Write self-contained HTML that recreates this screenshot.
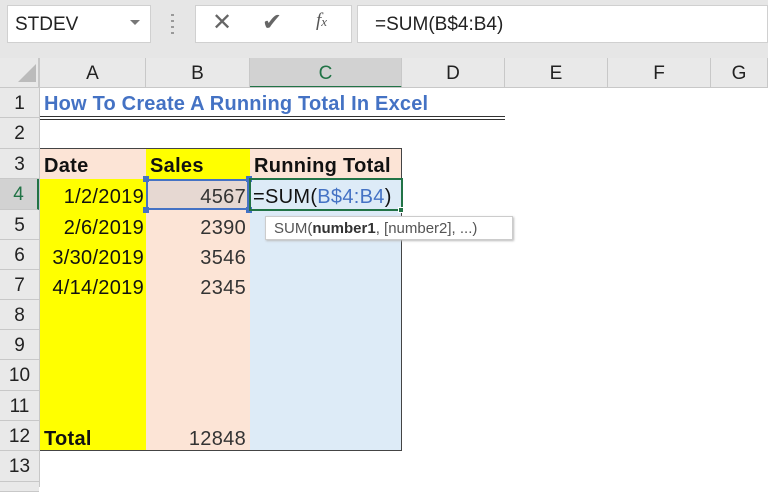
<!DOCTYPE html>
<html><head><meta charset="utf-8"><style>
body{margin:0;width:768px;height:487px;overflow:hidden;background:#fff;font-family:"Liberation Sans",Calibri,sans-serif;position:relative}
.a{position:absolute;box-sizing:border-box}
.rh{position:absolute;left:0;width:39px;background:#e9e9e9;border-bottom:1px solid #c8c8c8;color:#222;font-size:19px;text-align:center;box-sizing:border-box}
.ch{position:absolute;top:58px;height:30px;background:#e9e9e9;border-right:1px solid #c8c8c8;color:#222;font-size:19px;text-align:center;line-height:31px;box-sizing:border-box}
.c{position:absolute;box-sizing:border-box;font-size:20px;color:#111;white-space:nowrap;letter-spacing:0.3px}
</style></head><body>
<div class="a" style="left:0;top:0;width:768px;height:58px;background:#e6e6e6"></div>
<div class="a" style="left:7px;top:5px;width:144px;height:38px;background:#fff;border:1px solid #d0d0d0;font-size:19px;padding:8px 0 0 7px;color:#222">STDEV</div>
<div class="a" style="left:130px;top:20px;width:0;height:0;border-left:5px solid transparent;border-right:5px solid transparent;border-top:5px solid #777"></div>
<div class="a" style="left:171px;top:14px;width:3px;height:20px;background:repeating-linear-gradient(#999 0 2px,transparent 2px 6px)"></div>
<div class="a" style="left:195px;top:5px;width:157px;height:38px;background:#fff;border:1px solid #d0d0d0"></div>
<div class="a" style="left:212px;top:8px;font-size:24px;color:#666">✕</div>
<div class="a" style="left:262px;top:8px;font-size:24px;color:#666">✔</div>
<div class="a" style="left:316px;top:10px;font-size:19px;color:#555;font-style:italic;font-family:'Liberation Serif',serif">f<span style="font-size:13px">x</span></div>
<div class="a" style="left:357px;top:5px;width:411px;height:38px;background:#fff;border:1px solid #d0d0d0;font-size:19px;padding:8px 0 0 17px;color:#222">=SUM(B$4:B4)</div>
<div class="a" style="left:0;top:58px;width:39px;height:30px;background:#e9e9e9;border-right:1px solid #c8c8c8"></div>
<div class="a" style="left:18px;top:64px;width:0;height:0;border-left:18px solid transparent;border-bottom:18px solid #bbb"></div>
<div class="ch" style="left:40px;width:106px">A</div>
<div class="ch" style="left:146px;width:104px">B</div>
<div class="ch" style="left:250px;width:152px;background:#d2d2d2;color:#217346;border-bottom:2px solid #217346">C</div>
<div class="ch" style="left:402px;width:103px">D</div>
<div class="ch" style="left:505px;width:103px">E</div>
<div class="ch" style="left:608px;width:103px">F</div>
<div class="ch" style="left:711px;width:57px">G</div>
<div class="a" style="left:0;top:87px;width:768px;height:1px;background:#c8c8c8"></div>
<div class="a" style="left:39px;top:58px;width:1px;height:429px;background:#c8c8c8"></div>
<div class="rh" style="top:88px;height:30px;line-height:32px">1</div>
<div class="rh" style="top:118px;height:31px;line-height:32px">2</div>
<div class="rh" style="top:149px;height:30px;line-height:32px">3</div>
<div class="rh" style="top:179px;height:31px;line-height:32px;background:#d2d2d2;color:#217346;border-right:2px solid #217346">4</div>
<div class="rh" style="top:210px;height:30px;line-height:32px">5</div>
<div class="rh" style="top:240px;height:30px;line-height:32px">6</div>
<div class="rh" style="top:270px;height:30px;line-height:32px">7</div>
<div class="rh" style="top:300px;height:30px;line-height:32px">8</div>
<div class="rh" style="top:330px;height:30px;line-height:32px">9</div>
<div class="rh" style="top:360px;height:31px;line-height:32px">10</div>
<div class="rh" style="top:391px;height:30px;line-height:32px">11</div>
<div class="rh" style="top:421px;height:30px;line-height:32px">12</div>
<div class="rh" style="top:451px;height:31px;line-height:32px">13</div>
<div class="rh" style="top:482px;height:10px"></div>
<div class="c" style="left:44px;top:93px;color:#4472c4;font-weight:bold;letter-spacing:0.2px">How To Create A Running Total In Excel</div>
<div class="a" style="left:40px;top:116px;width:465px;height:4px;border-top:1px solid #333;border-bottom:1px solid #333"></div>
<div class="a" style="left:40px;top:149px;width:106px;height:30px;background:#fce4d6"></div>
<div class="a" style="left:146px;top:149px;width:104px;height:30px;background:#ffff00"></div>
<div class="a" style="left:250px;top:149px;width:152px;height:30px;background:#fce4d6"></div>
<div class="a" style="left:40px;top:179px;width:106px;height:272px;background:#ffff00"></div>
<div class="a" style="left:146px;top:179px;width:104px;height:272px;background:#fce4d6"></div>
<div class="a" style="left:250px;top:179px;width:152px;height:272px;background:#ddebf7"></div>
<div class="a" style="left:146px;top:179px;width:104px;height:31px;background:#e6d8d2"></div>
<div class="a" style="left:40px;top:148px;width:362px;height:303px;border:1px solid #444;border-left:none"></div>
<div class="c" style="left:44px;top:155px;font-weight:bold">Date</div>
<div class="c" style="left:150px;top:155px;font-weight:bold">Sales</div>
<div class="c" style="left:254px;top:155px;font-weight:bold">Running Total</div>
<div class="c" style="left:40px;width:104px;text-align:right;top:186px">1/2/2019</div>
<div class="c" style="left:40px;width:104px;text-align:right;top:217px">2/6/2019</div>
<div class="c" style="left:40px;width:104px;text-align:right;top:247px">3/30/2019</div>
<div class="c" style="left:40px;width:104px;text-align:right;top:277px">4/14/2019</div>
<div class="c" style="left:146px;width:100px;text-align:right;top:186px;color:#333">4567</div>
<div class="c" style="left:146px;width:100px;text-align:right;top:217px;color:#333">2390</div>
<div class="c" style="left:146px;width:100px;text-align:right;top:247px;color:#333">3546</div>
<div class="c" style="left:146px;width:100px;text-align:right;top:277px;color:#333">2345</div>
<div class="c" style="left:44px;top:428px;font-weight:bold">Total</div>
<div class="c" style="left:146px;width:100px;text-align:right;top:428px;color:#333">12848</div>
<div class="a" style="left:146px;top:179px;width:103px;height:31px;border:2px solid #4472c4"></div>
<div class="a" style="left:143px;top:176px;width:6px;height:6px;background:#4472c4"></div>
<div class="a" style="left:246px;top:176px;width:6px;height:6px;background:#4472c4"></div>
<div class="a" style="left:143px;top:207px;width:6px;height:6px;background:#4472c4"></div>
<div class="a" style="left:246px;top:207px;width:6px;height:6px;background:#4472c4"></div>
<div class="a" style="left:249px;top:178px;width:154px;height:33px;border:2px solid #217346"></div>
<div class="a" style="left:398px;top:207px;width:6px;height:6px;background:#217346;border:1px solid #fff"></div>
<div class="c" style="left:253px;top:186px">=SUM(<span style="color:#4472c4">B$4:B4</span>)</div>
<div class="a" style="left:265px;top:216px;width:248px;height:24px;background:#fff;border:1px solid #ccc;box-shadow:1px 1px 2px #bbb;font-size:15px;color:#555;padding:3px 0 0 8px;white-space:nowrap">SUM(<b style="color:#333">number1</b>, [number2], ...)</div>
</body></html>
